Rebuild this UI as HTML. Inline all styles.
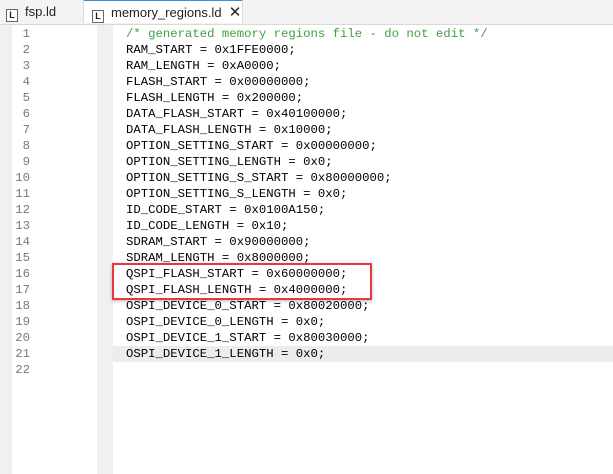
<!DOCTYPE html>
<html><head><style>
body{margin:0;width:613px;height:474px;background:#fff;position:relative;overflow:hidden;font-family:"Liberation Sans",sans-serif}
.tabbar{position:absolute;left:0;top:0;width:613px;height:24px;background:#f3f3f3;border-bottom:1px solid #d8d8d8}
.tab{position:absolute;top:0;height:24px;font-size:13px;line-height:24px;color:#222}
.ic{display:inline-block;width:10px;height:11px;border:1px solid #666;font-size:9px;line-height:11px;text-align:center;vertical-align:-2px;margin-right:7px;background:#fff;font-weight:bold}
.g1{position:absolute;left:0;top:25px;width:12px;height:449px;background:#f0f0f0}
.g2{position:absolute;left:97px;top:25px;width:16px;height:449px;background:#f0f0f0}
.nums{position:absolute;left:0;width:30px;text-align:right;top:26px;font-family:"Liberation Mono",monospace;font-size:12.3px;line-height:16px;color:#787878}
.code{position:absolute;left:126px;top:26px;font-family:"Liberation Mono",monospace;font-size:12.3px;line-height:16px;color:#000;white-space:pre}
.hl{position:absolute;left:113px;top:346px;width:500px;height:16px;background:#ececec}
.box{position:absolute;left:112px;top:263px;width:256px;height:33px;border:2px solid #e8373d;box-shadow:0 1px 3px rgba(0,0,0,.3)}
</style></head><body>
<div class="tabbar">
<div class="tab" style="left:6px"><span class="ic">L</span>fsp.ld</div>
<div class="tab" style="left:83px;width:160px;background:#fff;border-top:2px solid #3c8fd6;border-left:1px solid #ddd;border-right:1px solid #ddd;height:24px;top:-1px;padding-left:8px;box-sizing:border-box"><span class="ic">L</span>memory_regions.ld &nbsp;<span style="font-size:15px">✕</span></div>
</div>
<div class="g1"></div><div class="g2"></div><div class="hl"></div>
<div class="nums">1<br>2<br>3<br>4<br>5<br>6<br>7<br>8<br>9<br>10<br>11<br>12<br>13<br>14<br>15<br>16<br>17<br>18<br>19<br>20<br>21<br>22</div>
<div class="code"><span style="color:#3f9f3f">/* generated memory regions file - do not edit */</span>
RAM_START = 0x1FFE0000;
RAM_LENGTH = 0xA0000;
FLASH_START = 0x00000000;
FLASH_LENGTH = 0x200000;
DATA_FLASH_START = 0x40100000;
DATA_FLASH_LENGTH = 0x10000;
OPTION_SETTING_START = 0x00000000;
OPTION_SETTING_LENGTH = 0x0;
OPTION_SETTING_S_START = 0x80000000;
OPTION_SETTING_S_LENGTH = 0x0;
ID_CODE_START = 0x0100A150;
ID_CODE_LENGTH = 0x10;
SDRAM_START = 0x90000000;
SDRAM_LENGTH = 0x8000000;
QSPI_FLASH_START = 0x60000000;
QSPI_FLASH_LENGTH = 0x4000000;
OSPI_DEVICE_0_START = 0x80020000;
OSPI_DEVICE_0_LENGTH = 0x0;
OSPI_DEVICE_1_START = 0x80030000;
OSPI_DEVICE_1_LENGTH = 0x0;
</div>
<div class="box"></div>
</body></html>
